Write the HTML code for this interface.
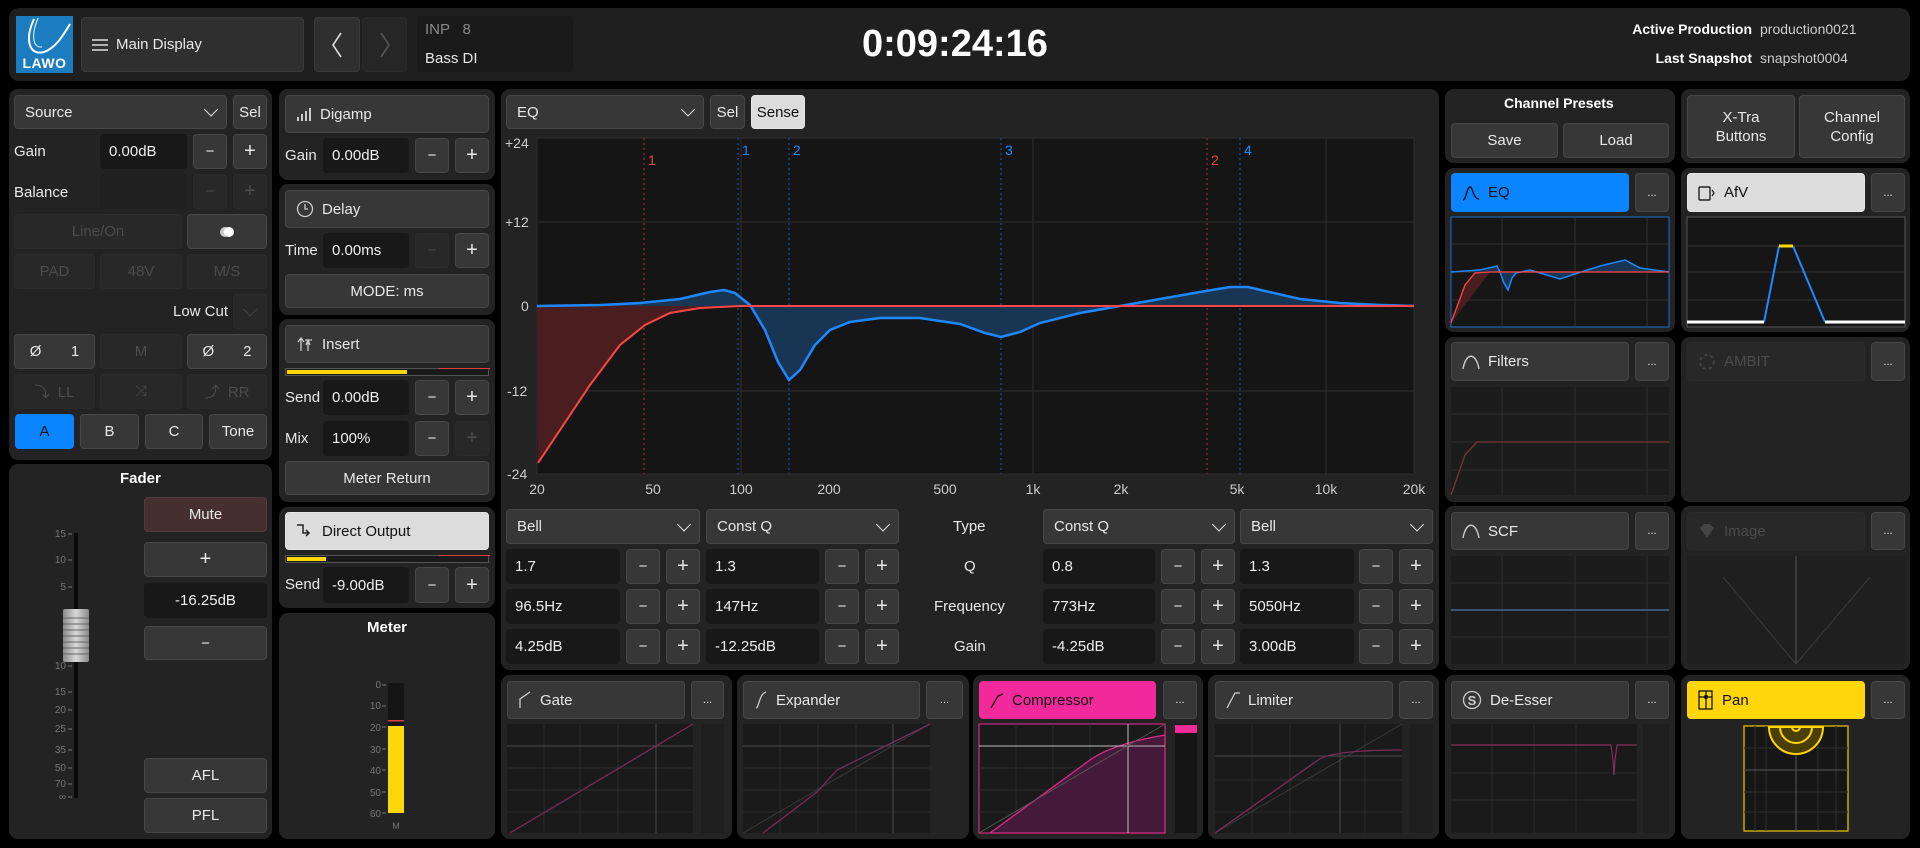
<!DOCTYPE html>
<html><head><meta charset="utf-8"><style>
*{margin:0;padding:0;box-sizing:border-box}
body{width:1920px;height:848px;background:#000;position:relative;overflow:hidden;font-family:"Liberation Sans",sans-serif;color:#e8e8e8}
.p{position:absolute;background:#232323;border-radius:9px}
.b{position:absolute;background:#373737;border:1px solid #474747;border-radius:4px;color:#e8e8e8;font-size:15px;display:flex;align-items:center;justify-content:center;white-space:nowrap}
.b.x{background:#282828;border-color:#2c2c2c;color:#4c4c4c}
.b.lt{justify-content:flex-start;padding-left:10px}
.f{position:absolute;background:#181818;border-radius:4px;color:#eee;font-size:15px;display:flex;align-items:center;padding-left:9px;white-space:nowrap}
.f.x{background:#202020}
.t{position:absolute;font-size:15px;color:#e8e8e8;white-space:nowrap}
.c{position:absolute;right:10px;top:50%;width:10px;height:10px;border-right:1.5px solid #ddd;border-bottom:1.5px solid #ddd;transform:translateY(-75%) rotate(45deg)}
.ic{margin-right:8px;display:inline-block}
</style></head><body>

<!-- top bar -->
<div class="p" style="left:9px;top:8px;width:1901px;height:73px;background:#1f1f1f;border-radius:10px"></div>
<div style="position:absolute;left:16px;top:16px;width:57px;height:57px;background:#1b7cbf">
<svg width="57" height="40" style="position:absolute;left:0;top:0"><path d="M18 3 C8 25 14 40 28 36 C40 32 48 18 54 8" stroke="#fff" stroke-width="2" fill="none"/><path d="M22 2 C14 22 18 32 26 31" stroke="#cfe6f5" stroke-width="1.2" fill="none"/></svg>
<div style="position:absolute;left:0;bottom:2px;width:57px;text-align:center;font-weight:bold;font-size:14px;color:#fff;letter-spacing:0.5px">LAWO</div></div>
<div class="b lt" style="left:81px;top:17px;width:223px;height:55px;background:#2f2f2f;border-color:#3a3a3a">
<svg class="ic" width="16" height="12"><path d="M0 1H16M0 6H16M0 11H16" stroke="#ddd" stroke-width="1.5"/></svg>Main Display</div>
<div class="b" style="left:314px;top:17px;width:46px;height:55px;background:#2f2f2f;border-color:#3a3a3a"><svg width="12" height="26"><path d="M10 1L2 13L10 25" stroke="#ddd" stroke-width="1.6" fill="none"/></svg></div>
<div class="b" style="left:362px;top:17px;width:45px;height:55px;background:#262626;border-color:#2a2a2a"><svg width="12" height="26"><path d="M2 1L10 13L2 25" stroke="#555" stroke-width="1.6" fill="none"/></svg></div>
<div style="position:absolute;left:417px;top:16px;width:156px;height:56px;background:#1a1a1a;border-radius:4px"></div>
<div class="t" style="left:425px;top:21px;color:#888">INP&nbsp;&nbsp;&nbsp;8</div>
<div class="t" style="left:425px;top:50px">Bass DI</div>
<div class="t" style="left:862px;top:23px;font-size:38px;font-weight:bold;color:#fff">0:09:24:16</div>
<div class="t" style="right:168px;top:21px;font-weight:bold;color:#fff;font-size:14px">Active Production</div>
<div class="t" style="left:1760px;top:21px;color:#ccc;font-size:14px">production0021</div>
<div class="t" style="right:168px;top:50px;font-weight:bold;color:#fff;font-size:14px">Last Snapshot</div>
<div class="t" style="left:1760px;top:50px;color:#ccc;font-size:14px">snapshot0004</div>

<!-- panels -->
<div class="p" style="left:9px;top:89px;width:263px;height:371px"></div>
<div class="p" style="left:9px;top:464px;width:263px;height:375px"></div>
<div class="p" style="left:279px;top:89px;width:216px;height:91px"></div>
<div class="p" style="left:279px;top:184px;width:216px;height:131px"></div>
<div class="p" style="left:279px;top:319px;width:216px;height:183px"></div>
<div class="p" style="left:279px;top:507px;width:216px;height:101px"></div>
<div class="p" style="left:279px;top:613px;width:216px;height:226px"></div>
<div class="p" style="left:501px;top:89px;width:938px;height:581px"></div>
<div class="p" style="left:1445px;top:89px;width:230px;height:74px"></div>
<div class="p" style="left:1681px;top:89px;width:229px;height:74px"></div>
<div class="p" style="left:1445px;top:168px;width:230px;height:164px"></div>
<div class="p" style="left:1681px;top:168px;width:229px;height:164px"></div>
<div class="p" style="left:1445px;top:337px;width:230px;height:165px"></div>
<div class="p" style="left:1681px;top:337px;width:229px;height:165px"></div>
<div class="p" style="left:1445px;top:506px;width:230px;height:164px"></div>
<div class="p" style="left:1681px;top:506px;width:229px;height:164px"></div>
<div class="p" style="left:501px;top:675px;width:231px;height:164px"></div>
<div class="p" style="left:737px;top:675px;width:232px;height:164px"></div>
<div class="p" style="left:973px;top:675px;width:230px;height:164px"></div>
<div class="p" style="left:1208px;top:675px;width:231px;height:164px"></div>
<div class="p" style="left:1445px;top:675px;width:230px;height:164px"></div>
<div class="p" style="left:1681px;top:675px;width:229px;height:164px"></div>

<!-- left panel -->
<div class="b lt" style="left:14px;top:95px;width:213px;height:34px">Source<span class="c"></span></div>
<div class="b" style="left:233px;top:95px;width:34px;height:34px">Sel</div>
<div class="t" style="left:14px;top:143px">Gain</div>
<div class="f" style="left:100px;top:134px;width:87px;height:35px">0.00dB</div>
<div class="b" style="left:193px;top:134px;width:34px;height:35px">−</div>
<div class="b" style="left:233px;top:134px;width:34px;height:35px;font-size:20px">+</div>
<div class="t" style="left:14px;top:184px">Balance</div>
<div class="f x" style="left:100px;top:174px;width:87px;height:35px"></div>
<div class="b x" style="left:193px;top:174px;width:34px;height:35px">−</div>
<div class="b x" style="left:233px;top:174px;width:34px;height:35px;font-size:20px">+</div>
<div class="b x" style="left:14px;top:214px;width:168px;height:35px">Line/On</div>
<div class="b" style="left:187px;top:214px;width:80px;height:35px"><svg width="14" height="12"><circle cx="5" cy="6" r="5" fill="#ccc"/><circle cx="9" cy="6" r="5" fill="#fff"/></svg></div>
<div class="b x" style="left:14px;top:254px;width:81px;height:35px">PAD</div>
<div class="b x" style="left:100px;top:254px;width:82px;height:35px">48V</div>
<div class="b x" style="left:187px;top:254px;width:80px;height:35px">M/S</div>
<div class="t" style="left:173px;top:303px">Low Cut</div>
<div class="b x" style="left:233px;top:294px;width:34px;height:35px"><span class="c" style="border-color:#444;right:11px"></span></div>
<div class="b" style="left:14px;top:334px;width:81px;height:35px;justify-content:space-around">Ø<span>1</span></div>
<div class="b x" style="left:100px;top:334px;width:82px;height:35px">M</div>
<div class="b" style="left:187px;top:334px;width:80px;height:35px;justify-content:space-around">Ø<span>2</span></div>
<div class="b x" style="left:14px;top:374px;width:81px;height:35px">⤵&nbsp;&nbsp;LL</div>
<div class="b x" style="left:100px;top:374px;width:82px;height:35px">⤨</div>
<div class="b x" style="left:187px;top:374px;width:80px;height:35px">⤴&nbsp;&nbsp;RR</div>
<div class="b" style="left:15px;top:414px;width:59px;height:35px;background:#0a84ff;border-color:#0a84ff;color:#111">A</div>
<div class="b" style="left:80px;top:414px;width:59px;height:35px">B</div>
<div class="b" style="left:145px;top:414px;width:58px;height:35px">C</div>
<div class="b" style="left:209px;top:414px;width:58px;height:35px">Tone</div>

<!-- fader -->
<div class="t" style="left:120px;top:470px;font-weight:bold;color:#fff">Fader</div>
<div class="b" style="left:144px;top:497px;width:123px;height:35px;background:#45302f;border-color:#533b3a">Mute</div>
<div class="b" style="left:144px;top:542px;width:123px;height:35px;font-size:20px">+</div>
<div class="f" style="left:144px;top:583px;width:123px;height:35px;justify-content:center;padding:0">-16.25dB</div>
<div class="b" style="left:144px;top:626px;width:123px;height:34px">−</div>
<div class="b" style="left:144px;top:758px;width:123px;height:35px">AFL</div>
<div class="b" style="left:144px;top:798px;width:123px;height:35px">PFL</div>

<!-- column 2 -->
<div class="b lt" style="left:285px;top:95px;width:204px;height:38px"><svg class="ic" width="16" height="16"><path d="M2 15V11M6 15V8M10 15V5M14 15V2" stroke="#ccc" stroke-width="2"/></svg>Digamp</div>
<div class="t" style="left:285px;top:147px">Gain</div>
<div class="f" style="left:323px;top:138px;width:86px;height:35px">0.00dB</div>
<div class="b" style="left:415px;top:138px;width:34px;height:35px">−</div>
<div class="b" style="left:455px;top:138px;width:34px;height:35px;font-size:20px">+</div>
<div class="b lt" style="left:285px;top:190px;width:204px;height:38px"><svg class="ic" width="18" height="18"><circle cx="9" cy="9" r="7.5" stroke="#ccc" stroke-width="1.3" fill="none"/><path d="M9 4V9H12" stroke="#ccc" stroke-width="1.3" fill="none"/></svg>Delay</div>
<div class="t" style="left:285px;top:242px">Time</div>
<div class="f" style="left:323px;top:233px;width:86px;height:35px">0.00ms</div>
<div class="b x" style="left:415px;top:233px;width:34px;height:35px">−</div>
<div class="b" style="left:455px;top:233px;width:34px;height:35px;font-size:20px">+</div>
<div class="b" style="left:285px;top:274px;width:204px;height:34px">MODE: ms</div>
<div class="b lt" style="left:285px;top:325px;width:204px;height:38px"><svg class="ic" width="18" height="16"><path d="M5 15V3M2 6L5 2L8 6M12 15V4M9 4H16M12 4L10 9M12 4L14 9" stroke="#ccc" stroke-width="1.3" fill="none"/></svg>Insert</div>
<div style="position:absolute;left:285px;top:368px;width:204px;height:8px;border:1px solid #555;background:#1a1a1a"><div style="position:absolute;left:1px;top:1px;width:120px;height:4px;background:#ffd60a"></div><div style="position:absolute;left:153px;top:-1px;width:51px;height:1px;background:#e04040"></div></div>
<div class="t" style="left:285px;top:389px">Send</div>
<div class="f" style="left:323px;top:380px;width:86px;height:35px">0.00dB</div>
<div class="b" style="left:415px;top:380px;width:34px;height:35px">−</div>
<div class="b" style="left:455px;top:380px;width:34px;height:35px;font-size:20px">+</div>
<div class="t" style="left:285px;top:430px">Mix</div>
<div class="f" style="left:323px;top:421px;width:86px;height:35px">100%</div>
<div class="b" style="left:415px;top:421px;width:34px;height:35px">−</div>
<div class="b x" style="left:455px;top:421px;width:34px;height:35px;font-size:20px">+</div>
<div class="b" style="left:285px;top:461px;width:204px;height:34px">Meter Return</div>
<div class="b lt" style="left:285px;top:512px;width:204px;height:38px;background:#dcdcdc;border-color:#e5e5e5;color:#111"><svg class="ic" width="18" height="16"><path d="M1 2H7V10H13M10 7L13 10L10 13" stroke="#222" stroke-width="1.5" fill="none"/></svg>Direct Output</div>
<div style="position:absolute;left:285px;top:555px;width:204px;height:8px;border:1px solid #555;background:#1a1a1a"><div style="position:absolute;left:1px;top:1px;width:39px;height:4px;background:#ffd60a"></div><div style="position:absolute;left:153px;top:-1px;width:51px;height:1px;background:#e04040"></div></div>
<div class="t" style="left:285px;top:576px">Send</div>
<div class="f" style="left:323px;top:567px;width:86px;height:36px">-9.00dB</div>
<div class="b" style="left:415px;top:567px;width:34px;height:36px">−</div>
<div class="b" style="left:455px;top:567px;width:34px;height:36px;font-size:20px">+</div>
<div class="t" style="left:367px;top:619px;font-weight:bold;color:#fff">Meter</div>

<!-- EQ panel controls -->
<div class="b lt" style="left:506px;top:95px;width:198px;height:34px">EQ<span class="c"></span></div>
<div class="b" style="left:710px;top:95px;width:35px;height:34px">Sel</div>
<div class="b" style="left:751px;top:95px;width:54px;height:34px;background:#dcdcdc;border-color:#e5e5e5;color:#111">Sense</div>

<div class="b lt" style="left:506px;top:509px;width:194px;height:35px">Bell<span class="c"></span></div>
<div class="b lt" style="left:706px;top:509px;width:193px;height:35px">Const Q<span class="c"></span></div>
<div class="t" style="left:953px;top:518px">Type</div>
<div class="b lt" style="left:1043px;top:509px;width:192px;height:35px">Const Q<span class="c"></span></div>
<div class="b lt" style="left:1240px;top:509px;width:193px;height:35px">Bell<span class="c"></span></div>
<div class="t" style="left:964px;top:558px">Q</div>
<div class="t" style="left:934px;top:598px">Frequency</div>
<div class="t" style="left:954px;top:638px">Gain</div>

<div class="f" style="left:506px;top:549px;width:114px;height:35px">1.7</div>
<div class="b" style="left:626px;top:549px;width:34px;height:35px">−</div><div class="b" style="left:666px;top:549px;width:34px;height:35px;font-size:20px">+</div>
<div class="f" style="left:706px;top:549px;width:113px;height:35px">1.3</div>
<div class="b" style="left:825px;top:549px;width:34px;height:35px">−</div><div class="b" style="left:865px;top:549px;width:34px;height:35px;font-size:20px">+</div>
<div class="f" style="left:1043px;top:549px;width:112px;height:35px">0.8</div>
<div class="b" style="left:1161px;top:549px;width:34px;height:35px">−</div><div class="b" style="left:1201px;top:549px;width:34px;height:35px;font-size:20px">+</div>
<div class="f" style="left:1240px;top:549px;width:114px;height:35px">1.3</div>
<div class="b" style="left:1359px;top:549px;width:34px;height:35px">−</div><div class="b" style="left:1399px;top:549px;width:34px;height:35px;font-size:20px">+</div>

<div class="f" style="left:506px;top:589px;width:114px;height:35px">96.5Hz</div>
<div class="b" style="left:626px;top:589px;width:34px;height:35px">−</div><div class="b" style="left:666px;top:589px;width:34px;height:35px;font-size:20px">+</div>
<div class="f" style="left:706px;top:589px;width:113px;height:35px">147Hz</div>
<div class="b" style="left:825px;top:589px;width:34px;height:35px">−</div><div class="b" style="left:865px;top:589px;width:34px;height:35px;font-size:20px">+</div>
<div class="f" style="left:1043px;top:589px;width:112px;height:35px">773Hz</div>
<div class="b" style="left:1161px;top:589px;width:34px;height:35px">−</div><div class="b" style="left:1201px;top:589px;width:34px;height:35px;font-size:20px">+</div>
<div class="f" style="left:1240px;top:589px;width:114px;height:35px">5050Hz</div>
<div class="b" style="left:1359px;top:589px;width:34px;height:35px">−</div><div class="b" style="left:1399px;top:589px;width:34px;height:35px;font-size:20px">+</div>

<div class="f" style="left:506px;top:629px;width:114px;height:35px">4.25dB</div>
<div class="b" style="left:626px;top:629px;width:34px;height:35px">−</div><div class="b" style="left:666px;top:629px;width:34px;height:35px;font-size:20px">+</div>
<div class="f" style="left:706px;top:629px;width:113px;height:35px">-12.25dB</div>
<div class="b" style="left:825px;top:629px;width:34px;height:35px">−</div><div class="b" style="left:865px;top:629px;width:34px;height:35px;font-size:20px">+</div>
<div class="f" style="left:1043px;top:629px;width:112px;height:35px">-4.25dB</div>
<div class="b" style="left:1161px;top:629px;width:34px;height:35px">−</div><div class="b" style="left:1201px;top:629px;width:34px;height:35px;font-size:20px">+</div>
<div class="f" style="left:1240px;top:629px;width:114px;height:35px">3.00dB</div>
<div class="b" style="left:1359px;top:629px;width:34px;height:35px">−</div><div class="b" style="left:1399px;top:629px;width:34px;height:35px;font-size:20px">+</div>

<!-- right side -->
<div class="t" style="left:1504px;top:95px;font-weight:bold;color:#fff;font-size:14px">Channel Presets</div>
<div class="b" style="left:1451px;top:123px;width:107px;height:35px">Save</div>
<div class="b" style="left:1563px;top:123px;width:106px;height:35px">Load</div>
<div class="b" style="left:1687px;top:95px;width:108px;height:63px;text-align:center;line-height:19px">X-Tra<br>Buttons</div>
<div class="b" style="left:1799px;top:95px;width:106px;height:63px;text-align:center;line-height:19px">Channel<br>Config</div>

<div class="b lt" style="left:1451px;top:173px;width:178px;height:39px;background:#0a84ff;border-color:#0a84ff;color:#111"><svg class="ic" width="18" height="16"><path d="M1 15C4 15 5 2 8 2C11 2 11 14 17 14" stroke="#111" stroke-width="1.4" fill="none"/></svg>EQ</div>
<div class="b" style="left:1635px;top:173px;width:34px;height:39px;font-size:11px">...</div>
<div class="b lt" style="left:1687px;top:173px;width:178px;height:39px;background:#dcdcdc;border-color:#e5e5e5;color:#111"><svg class="ic" width="18" height="16"><rect x="1" y="2" width="11" height="13" rx="1" stroke="#222" stroke-width="1.4" fill="none"/><path d="M14 5L16 8L14 11" stroke="#222" stroke-width="1.3" fill="none"/></svg>AfV</div>
<div class="b" style="left:1871px;top:173px;width:34px;height:39px;font-size:11px">...</div>

<div class="b lt" style="left:1451px;top:342px;width:178px;height:39px"><svg class="ic" width="18" height="16"><path d="M1 15C4 -2 14 -2 17 15" stroke="#ccc" stroke-width="1.4" fill="none"/></svg>Filters</div>
<div class="b" style="left:1635px;top:342px;width:34px;height:39px;font-size:11px">...</div>
<div class="b x lt" style="left:1687px;top:342px;width:178px;height:39px"><svg class="ic" width="18" height="18"><circle cx="9" cy="9" r="7" stroke="#444" stroke-width="2" stroke-dasharray="3 3" fill="none"/></svg>AMBIT</div>
<div class="b" style="left:1871px;top:342px;width:34px;height:39px;font-size:11px">...</div>

<div class="b lt" style="left:1451px;top:512px;width:178px;height:38px"><svg class="ic" width="18" height="16"><path d="M1 15C4 -2 14 -2 17 15" stroke="#ccc" stroke-width="1.4" fill="none"/></svg>SCF</div>
<div class="b" style="left:1635px;top:512px;width:34px;height:38px;font-size:11px">...</div>
<div class="b x lt" style="left:1687px;top:512px;width:178px;height:38px"><svg class="ic" width="18" height="16"><path d="M2 5L9 15L16 5L12 1H6Z" fill="#444"/></svg>Image</div>
<div class="b" style="left:1871px;top:512px;width:34px;height:38px;font-size:11px">...</div>

<!-- bottom buttons -->
<div class="b lt" style="left:507px;top:681px;width:178px;height:38px"><svg class="ic" width="14" height="18"><path d="M2 17V8L12 1" stroke="#ccc" stroke-width="1.3" fill="none"/></svg>Gate</div>
<div class="b" style="left:691px;top:681px;width:33px;height:38px;font-size:11px">...</div>
<div class="b lt" style="left:743px;top:681px;width:177px;height:38px"><svg class="ic" width="14" height="18"><path d="M2 17C5 17 5 3 12 1" stroke="#ccc" stroke-width="1.3" fill="none"/></svg>Expander</div>
<div class="b" style="left:926px;top:681px;width:37px;height:38px;font-size:11px">...</div>
<div class="b lt" style="left:979px;top:681px;width:177px;height:38px;background:#f2299b;border-color:#f2299b;color:#111"><svg class="ic" width="14" height="18"><path d="M1 17L8 5L13 3" stroke="#111" stroke-width="1.3" fill="none"/></svg>Compressor</div>
<div class="b" style="left:1163px;top:681px;width:34px;height:38px;font-size:11px">...</div>
<div class="b lt" style="left:1215px;top:681px;width:178px;height:38px"><svg class="ic" width="14" height="18"><path d="M1 17L9 2H14" stroke="#ccc" stroke-width="1.3" fill="none"/></svg>Limiter</div>
<div class="b" style="left:1399px;top:681px;width:34px;height:38px;font-size:11px">...</div>
<div class="b lt" style="left:1451px;top:681px;width:178px;height:38px"><svg class="ic" width="20" height="20"><circle cx="10" cy="10" r="8.5" stroke="#ccc" stroke-width="1.3" fill="none"/><text x="10" y="15" text-anchor="middle" font-size="13" font-weight="bold" fill="#ccc" font-family="Liberation Sans">S</text></svg>De-Esser</div>
<div class="b" style="left:1635px;top:681px;width:34px;height:38px;font-size:11px">...</div>
<div class="b lt" style="left:1687px;top:681px;width:178px;height:38px;background:#ffd60a;border-color:#ffd60a;color:#111"><svg class="ic" width="16" height="20"><rect x="1" y="1" width="13" height="18" stroke="#111" stroke-width="1.3" fill="none"/><path d="M1 7H14M8 1V19" stroke="#111" stroke-width="1.3"/><circle cx="8" cy="7" r="2.2" fill="#111"/></svg>Pan</div>
<div class="b" style="left:1871px;top:681px;width:34px;height:38px;font-size:11px">...</div>

<!-- graphics overlay -->
<svg width="1920" height="848" style="position:absolute;left:0;top:0;pointer-events:none" font-family="Liberation Sans">
<rect x="74" y="533" width="4" height="265" fill="#0a0a0a"/>
<g fill="#777" font-size="10" text-anchor="end">
<text x="66" y="537">15</text><text x="66" y="563">10</text><text x="66" y="590">5</text><text x="66" y="669">10</text><text x="66" y="695">15</text><text x="66" y="713">20</text><text x="66" y="732">25</text><text x="66" y="753">35</text><text x="66" y="771">50</text><text x="66" y="787">70</text><text x="66" y="800">∞</text></g>
<g stroke="#777"><path d="M68 534H72M68 560H72M68 587H72M68 666H72M68 692H72M68 710H72M68 729H72M68 750H72M68 768H72M68 784H72M68 797H72"/></g>
<defs><linearGradient id="kn" x1="0" x2="1"><stop offset="0" stop-color="#8a8a8a"/><stop offset=".5" stop-color="#d8d8d8"/><stop offset="1" stop-color="#8a8a8a"/></linearGradient></defs>
<rect x="63" y="609" width="26" height="53" rx="2" fill="url(#kn)"/>
<g stroke="#666"><path d="M63 618H89M63 624H89M63 630H89M63 636H89M63 642H89M63 648H89M63 654H89"/></g>
<rect x="388" y="683" width="16" height="130" fill="#151515"/>
<rect x="388" y="726" width="16" height="87" fill="#ffd60a"/>
<rect x="388" y="720" width="16" height="1.5" fill="#e04040"/>
<g fill="#777" font-size="10" text-anchor="end"><text x="381" y="688">0</text><text x="381" y="709">10</text><text x="381" y="731">20</text><text x="381" y="753">30</text><text x="381" y="774">40</text><text x="381" y="796">50</text><text x="381" y="817">60</text></g>
<g stroke="#777"><path d="M382 685H386M382 706H386M382 727H386M382 749H386M382 770H386M382 792H386M382 813H386"/></g>
<text x="396" y="829" fill="#777" font-size="9" text-anchor="middle">M</text>

<rect x="537" y="138" width="877" height="336" fill="#151515" stroke="#2c2c2c"/>
<g stroke="#2e2e2e"><path d="M537 222H1414M537 306H1414M537 391H1414M741 138V474M1033 138V474M1326 138V474"/></g>
<g stroke-dasharray="2 3" stroke-width="1"><path d="M644 138V474M1207 138V474" stroke="#a33"/><path d="M738 138V474M789 138V474M1001 138V474M1240 138V474" stroke="#1d5fb0"/></g>
<g font-size="14"><text x="648" y="165" fill="#e04848">1</text><text x="742" y="155" fill="#1e88ff">1</text><text x="793" y="155" fill="#1e88ff">2</text><text x="1005" y="155" fill="#1e88ff">3</text><text x="1211" y="165" fill="#e04848">2</text><text x="1244" y="155" fill="#1e88ff">4</text></g>
<path d="M537 306L538 463L560 430L590 385L620 345L645 325L670 313L700 308L740 306Z" fill="#4a1e1e"/>
<path d="M537 306L600 305L640 303L680 299L710 292L724 290L735 293L750 305L765 330L778 362L789 380L800 370L815 345L830 330L850 322L880 318L920 318L960 324L985 333L1001 337L1020 332L1040 323L1080 313L1120 306L1160 299L1200 292L1230 287L1248 287L1265 291L1300 299L1340 303L1380 305L1414 306Z" fill="#193554"/>
<path d="M537 306L600 305L640 303L680 299L710 292L724 290L735 293L750 305L765 330L778 362L789 380L800 370L815 345L830 330L850 322L880 318L920 318L960 324L985 333L1001 337L1020 332L1040 323L1080 313L1120 306L1160 299L1200 292L1230 287L1248 287L1265 291L1300 299L1340 303L1380 305L1414 306" fill="none" stroke="#1e88ff" stroke-width="2.5"/>
<path d="M538 463L560 430L590 385L620 345L645 325L670 313L700 308L740 306L1414 306" fill="none" stroke="#ff4545" stroke-width="2"/>
<g fill="#ccc" font-size="14"><text x="505" y="148">+24</text><text x="505" y="227">+12</text><text x="521" y="311">0</text><text x="507" y="396">-12</text><text x="507" y="479">-24</text></g>
<g fill="#ccc" font-size="14" text-anchor="middle"><text x="537" y="494">20</text><text x="653" y="494">50</text><text x="741" y="494">100</text><text x="829" y="494">200</text><text x="945" y="494">500</text><text x="1033" y="494">1k</text><text x="1121" y="494">2k</text><text x="1237" y="494">5k</text><text x="1326" y="494">10k</text><text x="1414" y="494">20k</text></g>

<rect x="1451" y="217" width="218" height="110" fill="#161616" stroke="#1a6fd0"/>
<g stroke="#333"><path d="M1451 244H1669M1451 272H1669M1451 300H1669M1502 217V327M1575 217V327M1647 217V327"/></g>
<path d="M1451 323L1465 285L1475 273L1490 272Z" fill="#4a1e1e"/>
<path d="M1451 272L1480 270L1497 266L1500 272L1504 283L1508 290L1512 278L1516 273L1530 270L1560 279L1572 275L1600 266L1625 260L1640 268L1669 272Z" fill="#193554"/>
<path d="M1451 272L1480 270L1497 266L1500 272L1504 283L1508 290L1512 278L1516 273L1530 270L1560 279L1572 275L1600 266L1625 260L1640 268L1669 272" fill="none" stroke="#1e88ff" stroke-width="1.5"/>
<path d="M1451 323L1465 285L1475 273L1490 272L1669 272" fill="none" stroke="#ff4545" stroke-width="1.3"/>
<rect x="1687" y="217" width="218" height="110" fill="#161616" stroke="#555"/>
<g stroke="#333"><path d="M1687 246H1905M1687 272H1905M1687 300H1905"/></g>
<path d="M1764 322L1779 246M1793 246L1825 322" stroke="#1e88ff" stroke-width="2" fill="none"/>
<path d="M1779 246H1793" stroke="#ffd60a" stroke-width="3"/>
<path d="M1687 322H1764M1825 322H1905" stroke="#fff" stroke-width="3"/>
<rect x="1451" y="387" width="218" height="108" fill="#1c1c1c"/>
<g stroke="#2e2e2e"><path d="M1451 414H1669M1451 442H1669M1451 470H1669M1502 387V495M1575 387V495M1647 387V495"/></g>
<path d="M1451 495L1465 455L1477 442L1669 442" stroke="#7a3434" stroke-width="1.3" fill="none"/>
<rect x="1451" y="556" width="218" height="108" fill="#1c1c1c"/>
<g stroke="#2e2e2e"><path d="M1451 583H1669M1451 637H1669M1502 556V664M1575 556V664M1647 556V664"/></g>
<path d="M1451 610H1669" stroke="#46658a" stroke-width="1.5"/>
<rect x="1687" y="556" width="218" height="108" fill="#1f1f1f"/>
<path d="M1796 556V664" stroke="#555"/>
<path d="M1723 577L1796 664L1870 577" stroke="#3a3a3a" fill="none"/>
<rect x="507" y="724" width="186" height="109" fill="#1a1a1a"/>
<g stroke="#2c2c2c"><path d="M507 768H693M507 790H693M507 812H693M544 724V833M580 724V833M618 724V833"/></g>
<path d="M507 746H693M656 724V833" stroke="#4a4a4a"/>
<path d="M510 833L693 724" stroke="#7a2d55" stroke-width="1.3"/>
<rect x="701" y="724" width="23" height="109" fill="#1e1e1e"/>
<rect x="743" y="724" width="187" height="109" fill="#1a1a1a"/>
<g stroke="#2c2c2c"><path d="M743 768H930M743 790H930M743 812H930M780 724V833M818 724V833M856 724V833"/></g>
<path d="M743 746H930M893 724V833" stroke="#4a4a4a"/>
<path d="M743 833L930 724" stroke="#3a3a3a"/>
<path d="M763 833L817 792L837 770L930 724" stroke="#7a2d55" stroke-width="1.3" fill="none"/>
<rect x="979" y="724" width="186" height="109" fill="#1a1a1a" stroke="#f2299b"/>
<g stroke="#2c2c2c"><path d="M979 768H1165M979 790H1165M979 812H1165M1016 724V833M1053 724V833M1090 724V833"/></g>
<path d="M990 833L1090 760Q1112 744 1165 735L1165 833Z" fill="#45193a" stroke="#d82c86" stroke-width="1.3"/>
<path d="M979 746H1165M1128 724V833" stroke="#bbb"/>
<path d="M979 833L1165 724" stroke="#555"/>
<rect x="1175" y="724" width="22" height="109" fill="#151515"/>
<rect x="1175" y="725" width="22" height="8" fill="#f2299b"/>
<rect x="1215" y="724" width="187" height="109" fill="#1a1a1a"/>
<g stroke="#2c2c2c"><path d="M1215 780H1402M1215 812H1402M1252 724V833M1290 724V833M1365 724V833"/></g>
<path d="M1215 756H1402M1340 724V833" stroke="#4a4a4a"/>
<path d="M1215 833L1402 724" stroke="#3a3a3a"/>
<path d="M1215 833L1318 760Q1333 750 1402 750" stroke="#7a2d55" stroke-width="1.3" fill="none"/>
<rect x="1410" y="724" width="23" height="109" fill="#1e1e1e"/>
<rect x="1451" y="724" width="186" height="109" fill="#1a1a1a"/>
<g stroke="#2c2c2c"><path d="M1451 773H1637M1451 800H1637M1492 724V833M1534 724V833M1576 724V833"/></g>
<path d="M1451 745H1611L1613 760L1614 775L1615 760L1617 745H1637" stroke="#8a2d5a" stroke-width="1.2" fill="none"/>
<rect x="1643" y="724" width="26" height="109" fill="#1e1e1e"/>
<rect x="1744" y="726" width="104" height="105" fill="#161616" stroke="#c9a800" stroke-width="1.5"/>
<g stroke="#2e2e2e"><path d="M1744 748H1848M1744 792H1848M1744 812H1848M1766 726V831M1818 726V831M1836 726V831M1755 726V831"/></g>
<path d="M1796 726V831M1744 770H1848" stroke="#555"/>
<path d="M1769 727A27 27 0 0 0 1823 727Z" fill="#4a3f00" stroke="#ffd60a" stroke-width="2"/>
<path d="M1780 727A16 16 0 0 0 1812 727" fill="none" stroke="#ffd60a" stroke-width="2"/>
<path d="M1792 727A4 4 0 0 0 1800 727" fill="none" stroke="#ffd60a" stroke-width="2"/>
</svg>
</body></html>
